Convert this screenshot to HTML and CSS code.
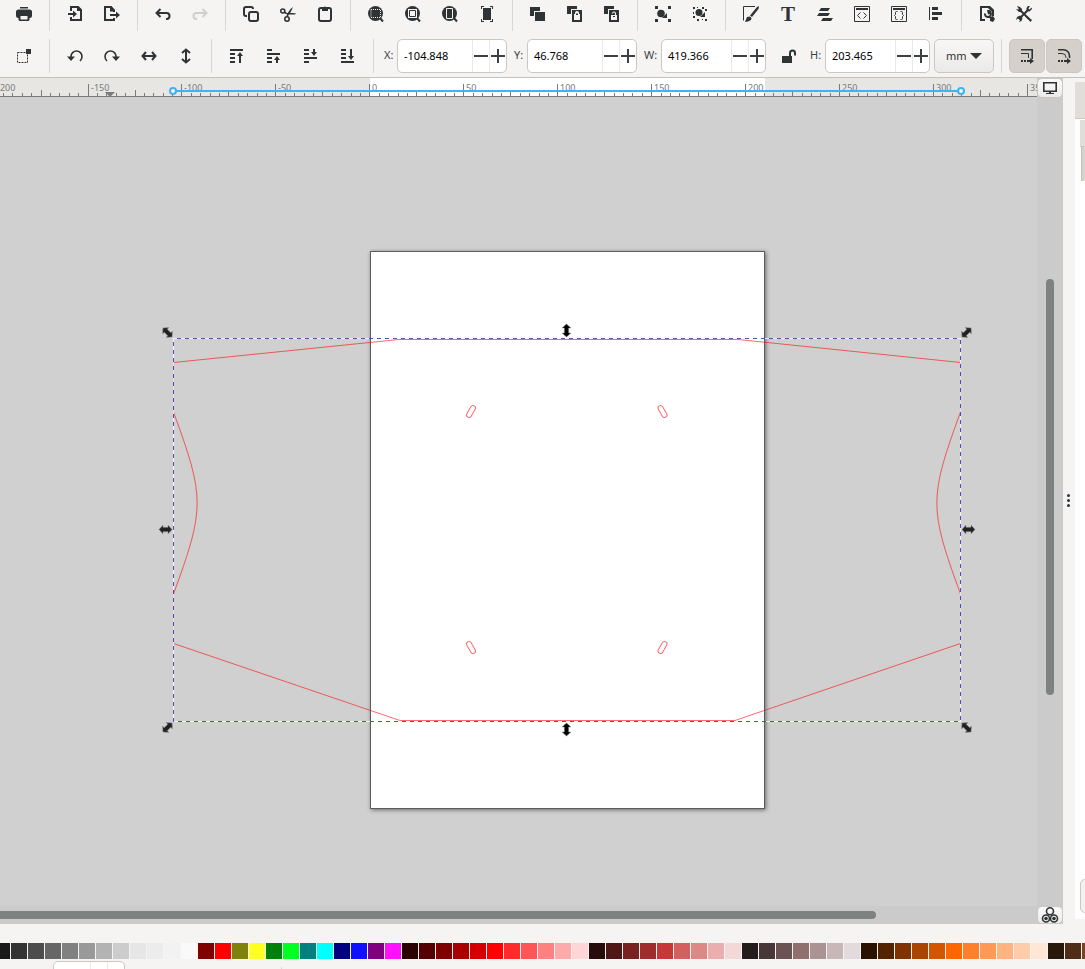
FILE: index.html
```html
<!DOCTYPE html>
<html lang="en">
<head>
<meta charset="utf-8">
<title>Vector editor</title>
<link rel="stylesheet" href="styles.css">
</head>
<body>
<header class="toolbars">
  <div class="bar commands" role="toolbar" aria-label="Commands">
    <button class="tool" aria-label="Print"><svg viewBox="0 0 16 16"><path d="M4 1h8v1.500H4z"/><rect y="3.500" width="16" height="8.500" rx="2.500"/><path d="M2.500 8h11v5.500a1.500 1.500 0 0 1-1.500 1.500H4a1.500 1.500 0 0 1-1.500-1.500z"/><path class="light" d="M4.500 10h7v3.500h-7z"/></svg></button>
    <span class="sep"></span>
    <button class="tool" aria-label="Import"><svg viewBox="0 0 16 16"><path class="line" d="M4 5V1h7l3 3v10H4v-3"/><path d="M10 0h1l4 4v1h-5zM1 7h5V4.500L10 8l-4 3.500V9H1z"/></svg></button>
    <button class="tool" aria-label="Export"><svg viewBox="0 0 16 16"><path class="line" d="M10 6V4.500L7 1H1v13h9v-2"/><path d="M6 0h1l4 4v1.500H6zM6 8h6V5.500L16 9l-4 3.500V10H6z"/></svg></button>
    <span class="sep"></span>
    <button class="tool" aria-label="Undo"><svg viewBox="0 0 16 16"><path class="line" d="M5.500 3 1.500 7l4 4M2 7h9.500a3 3 0 0 1 3 3v0a3 3 0 0 1-3 3H11"/></svg></button>
    <button class="tool" aria-label="Redo" disabled><svg viewBox="0 0 16 16"><path class="line" d="m10.500 3 4 4-4 4M14 7H4.500a3 3 0 0 0-3 3v0a3 3 0 0 0 3 3H5"/></svg></button>
    <span class="sep"></span>
    <button class="tool" aria-label="Copy"><svg viewBox="0 0 16 16"><path class="line" d="M4 10H3a2 2 0 0 1-2-2V3a2 2 0 0 1 2-2h5a2 2 0 0 1 2 2"/><rect class="line" x="6" y="6" width="9" height="9" rx="2"/></svg></button>
    <button class="tool" aria-label="Cut"><svg viewBox="0 0 16 16"><circle class="mid" cx="2.800" cy="5" r="2"/><circle class="mid" cx="7" cy="13" r="2.200"/><path class="mid" d="M4.500 6.300 6.500 7.500M7 11l1-3"/><path d="M6 7h7l3 .500L15 8.500H7zM7 8l3.500-5L13 1l-1.500 3.500L9 9z"/></svg></button>
    <button class="tool" aria-label="Paste"><svg viewBox="0 0 16 16"><rect class="line" x="2" y="2" width="12" height="13" rx="2"/><path d="M5 2h1.500a1.500 1.500 0 0 1 3 0H11v3H5z"/></svg></button>
    <span class="sep"></span>
    <button class="tool" aria-label="Zoom selection"><svg viewBox="0 0 16 16"><circle cx="7.500" cy="7.500" r="7.500"/><path class="line" d="m11 11 4 4.500"/><path class="dots" d="M3 3.500h9.500v8H3z"/></svg></button>
    <button class="tool" aria-label="Zoom drawing"><svg viewBox="0 0 16 16"><circle cx="7.500" cy="7.500" r="7.500"/><path class="line" d="m11 11 4 4.500"/><path class="light" d="M3 3h9v9H3z"/><path class="thin" d="M4.500 4.500h6v6h-6z"/></svg></button>
    <button class="tool" aria-label="Zoom page"><svg viewBox="0 0 16 16"><circle cx="7.500" cy="7.500" r="7.500"/><path class="line" d="m11 11 4 4.500"/><path class="lightline" d="M4.500 2.500h6v10h-6z"/></svg></button>
    <button class="tool" aria-label="Zoom page width"><svg viewBox="0 0 16 16"><path d="M4 2h8v12H4zM2 0h3v1H3v2H2zM14 0h-3v1h2v2h1zM2 16h3v-1H3v-2H2zM14 16h-3v-1h2v-2h1z"/></svg></button>
    <span class="sep"></span>
    <button class="tool" aria-label="Duplicate"><svg viewBox="0 0 16 16"><path d="M0 1h10v4H4v5H0zM5 6h10v9H5z"/></svg></button>
    <button class="tool" aria-label="Clone"><svg viewBox="0 0 16 16"><path d="M0 0h10v3H4v5H0zM5 4h10v12H5z"/><path class="light" d="M7 8h1V7a2 2 0 0 1 4 0v1h1v6H7z"/><path d="M9 7.500h2V9H9z"/></svg></button>
    <button class="tool" aria-label="Unlink clone"><svg viewBox="0 0 16 16"><path d="M0 0h10v3H4v5H0zM5 4h10v12H5z"/><path class="light" d="M7 9h4V7.500a1 1 0 0 0-2 0H8a2 2 0 0 1 4 0V9h1v5H7z"/><path d="M9 10h2v1H9z"/></svg></button>
    <span class="sep"></span>
    <button class="tool" aria-label="Group"><svg viewBox="0 0 16 16"><circle cx="6" cy="7.500" r="3.800"/><path d="M12 7v5H7zM0 0h3v3H0zM13 0h3v3h-3zM0 13h3v3H0zM13 13h3v3h-3z"/></svg></button>
    <button class="tool" aria-label="Ungroup"><svg viewBox="0 0 16 16"><circle cx="7" cy="6.500" r="3.500"/><path d="M13 6v5H8zM1 1h2v2H1zM5 1h1v1H5zM10 1h2v2h-2zM13 3h2v2h-2zM1 6h1v2H1zM1 10h2v2H1zM5 13h2v2H5zM10 13h1v1h-1zM13 13h2v2h-2z"/></svg></button>
    <span class="sep"></span>
    <button class="tool" aria-label="Fill and stroke"><svg viewBox="0 0 16 16"><path class="thin" d="M12 .500H.500v14"/><path d="M16 0 15.500 3 9 11l-2-1.500 7-8.500zM7 10.500 8.500 12 8 14l-3 1.500-3 .500 1-2.500L4 11z"/></svg></button>
    <button class="tool" aria-label="Text and font"><svg viewBox="0 0 16 16"><text class="serif" x="8" y="15" text-anchor="middle">T</text></svg></button>
    <button class="tool" aria-label="Layers"><svg viewBox="0 0 16 16"><path d="M4 2h9l-2 3H2zM2 7h11l-2 3H0zM6 12h10l-2 3H4z" /></svg></button>
    <button class="tool" aria-label="XML editor"><svg viewBox="0 0 16 16"><path class="thin" d="M.500.500h15v15H.500zM6.500 6.500 3.500 9.500l3 3M9.500 6.500l3 3-3 3"/><path d="M2 2h12v2H2z"/></svg></button>
    <button class="tool" aria-label="Selectors and CSS"><svg viewBox="0 0 16 16"><path class="thin" d="M.500.500h15v15H.500zM6.500 5.500h-1a1 1 0 0 0-1 1v2l-1 1 1 1v2a1 1 0 0 0 1 1h1M9.500 5.500h1a1 1 0 0 1 1 1v2l1 1-1 1v2a1 1 0 0 1-1 1h-1"/><path d="M2 2h12v2H2z"/></svg></button>
    <button class="tool" aria-label="Align and distribute"><svg viewBox="0 0 16 16"><path d="M1 1h1v13H1zM4 1h6v3H4zM4 6h10v3H4zM4 11h6v3H4z"/></svg></button>
    <span class="sep"></span>
    <button class="tool" aria-label="Document properties"><svg viewBox="0 0 16 16"><path class="line" d="M6 14H2V1h8l4 3.500V10"/><path d="M9 0h2l4 4v2h-2L9 2z"/><path class="line" d="M6 7.500a3 3 0 1 0 3-2.500M10.500 10.500l3.500 4"/><path d="M8 4h3l1 4-3 .500zM11 11l3-1 2 3-2 3-3-1z"/></svg></button>
    <button class="tool" aria-label="Preferences"><svg viewBox="0 0 16 16"><path class="line" d="m4 4 9 9M13 3 3 13"/><path d="m1 0 3 1 2 2v3L3 6 0 3l3 .500zM12 0l-1.500 2v3l3 .500L16 3l-.500-1.500L13 4l-1-1 2-3zM1 11l3-1.500L6.500 12l-1 3-2.500 1 1-2-2-1.500L0 14zM11 10l5 4-1.500 2-4.500-5z"/></svg></button>
  </div>

  <div class="bar controls" role="toolbar" aria-label="Selector controls">
    <button class="tool" aria-label="Scale stroke"><svg viewBox="0 0 16 16"><path class="dash" d="M1.500 4.500h10v10h-10z"/><path d="M10 1h5v5h-5z"/></svg></button>
    <span class="sep"></span>
    <button class="tool" aria-label="Rotate 90 left"><svg viewBox="0 0 16 16"><path class="mid" d="M4 10V8.500a5.500 5.500 0 0 1 11 0c0 2-1 3.500-2 4.500"/><path d="M0 8.500h8L4 13z"/></svg></button>
    <button class="tool" aria-label="Rotate 90 right"><svg viewBox="0 0 16 16"><path class="mid" d="M12 10V8.500a5.500 5.500 0 0 0-11 0c0 2 1 3.500 2 4.500"/><path d="M16 8.500H8l4 4.500z"/></svg></button>
    <button class="tool" aria-label="Flip horizontal"><svg viewBox="0 0 16 16"><path class="line" d="M2 8h12M5 4 1.500 8 5 12M11 4l3.500 4L11 12"/></svg></button>
    <button class="tool" aria-label="Flip vertical"><svg viewBox="0 0 16 16"><path class="line" d="M8 2v12M4 5l4-3.500L12 5M4 11l4 3.500L12 11"/></svg></button>
    <span class="sep"></span>
    <button class="tool" aria-label="Raise to top"><svg viewBox="0 0 16 16"><path d="M1 1h13v2H1zM1 5h5v2H1zM1 9h5v2H1zM1 13h5v2H1zM11 4l3 4h-2v7h-2V8H8z"/></svg></button>
    <button class="tool" aria-label="Raise"><svg viewBox="0 0 16 16"><path d="M1 1h5v2H1zM1 5h13v2H1zM1 9h5v2H1zM1 13h5v2H1zM11 8l3 4h-2v3h-2v-3H8z"/></svg></button>
    <button class="tool" aria-label="Lower"><svg viewBox="0 0 16 16"><path d="M1 1h5v2H1zM1 5h5v2H1zM1 9h13v2H1zM1 13h5v2H1zM11 8l3-4h-2V1h-2v3H8z"/></svg></button>
    <button class="tool" aria-label="Lower to bottom"><svg viewBox="0 0 16 16"><path d="M1 1h5v2H1zM1 5h5v2H1zM1 9h5v2H1zM1 13h13v2H1zM11 12l3-4h-2V1h-2v7H8z"/></svg></button>
    <span class="sep"></span>
    <label class="label first" for="x">X:</label>
    <div class="spin"><input id="x" value="-104.848"><button aria-label="Decrease X" class="minus"></button><button aria-label="Increase X" class="plus"></button></div>
    <label class="label" for="y">Y:</label>
    <div class="spin"><input id="y" value="46.768"><button aria-label="Decrease Y" class="minus"></button><button aria-label="Increase Y" class="plus"></button></div>
    <label class="label wide" for="w">W:</label>
    <div class="spin short"><input id="w" value="419.366"><button aria-label="Decrease width" class="minus"></button><button aria-label="Increase width" class="plus"></button></div>
    <button class="tool lock" aria-label="Lock ratio"><svg viewBox="0 0 16 16"><path d="M1 8h10v7H1z"/><path class="line" d="M9 8V5a2.500 2.500 0 0 1 5 0v2.500"/></svg></button>
    <label class="label height" for="h">H:</label>
    <div class="spin short"><input id="h" value="203.465"><button aria-label="Decrease height" class="minus"></button><button aria-label="Increase height" class="plus"></button></div>
    <div class="unit"><select aria-label="Unit"><option>mm</option><option>px</option></select></div>
    <span class="sep"></span>
    <button class="tool toggle" aria-label="Scale stroke width" aria-pressed="true"><svg viewBox="0 0 16 16"><path class="mid" d="M2 1.800h11.200V11"/><path class="thin" d="M2 5.500h7.500V10"/><path d="M2 12h2v2H2zM5 12h2v2H5zM8 12h3v-2l4 3-4 3v-2H8z"/></svg></button>
    <button class="tool toggle" aria-label="Scale rounded corners" aria-pressed="true"><svg viewBox="0 0 16 16"><path class="mid" d="M2 1.800h5.500a6 6 0 0 1 6 6V10"/><path class="thin" d="M2 5.500h4a4 4 0 0 1 4 4v.500"/><path d="M2 12h2v2H2zM5 12h2v2H5zM8 12h3v-2l4 3-4 3v-2H8z"/></svg></button>
  </div>
</header>

<main class="work">
  <section class="desk">
    <svg class="ruler" id="ruler" aria-label="Horizontal ruler">
      <rect class="ruler-page" x="370" y="0" width="395" height="18"/>
      <g id="ticks"></g>
      <path class="ruler-base" d="M0 18h4000v1H0z"/>
      <path class="ruler-mark" d="M105 14h10l-5 5z"/>
      <path class="ruler-span" d="M173 13h788"/>
      <circle class="ruler-end" cx="173" cy="13" r="3"/>
      <circle class="ruler-end" cx="961" cy="13" r="3"/>
    </svg>
    <svg class="canvas" aria-label="Drawing">
      <defs><path id="arrow" d="M-6.500 0-2.500-4.500V-2.200H2.500V-4.500L6.500 0 2.500 4.500V2.200H-2.500V4.500z"/></defs>
      <g transform="translate(0 -97)">
        <rect class="page" x="370.500" y="251.500" width="394" height="557"/>
        <g class="shape">
          <path d="M173.500 362.500 399 339.500H738L960.500 362.500V412C929 498 929 508 960.500 594V643.500L735 720.500H400L173.500 643.500V594C205 508 205 498 173.500 412z"/>
          <rect x="-2.500" y="-6.500" width="5" height="13" rx="2.500" transform="translate(471 411.500) rotate(30)"/>
          <rect x="-2.500" y="-6.500" width="5" height="13" rx="2.500" transform="translate(662.500 411.500) rotate(-30)"/>
          <rect x="-2.500" y="-6.500" width="5" height="13" rx="2.500" transform="translate(471 647.500) rotate(-30)"/>
          <rect x="-2.500" y="-6.500" width="5" height="13" rx="2.500" transform="translate(662.500 647.500) rotate(30)"/>
        </g>
        <g class="under"><path d="M173 338.500h788M173 721.500h788M173.500 338v384M960.500 338v384"/></g>
        <g class="bounds"><path d="M177 338.500h784M178 721.500h783M173.500 342v380M960.500 340v382"/></g>
        <g class="handles">
          <use href="#arrow" transform="translate(167.500 332.500) rotate(45)"/>
          <use href="#arrow" transform="translate(966.500 332.500) rotate(-45)"/>
          <use href="#arrow" transform="translate(167.500 727.500) rotate(-45)"/>
          <use href="#arrow" transform="translate(966.500 727.500) rotate(45)"/>
          <use href="#arrow" transform="translate(165.500 529.500)"/>
          <use href="#arrow" transform="translate(968.500 529.500)"/>
          <use class="solid" href="#arrow" transform="translate(566.500 330.500) rotate(90)"/>
          <use class="solid" href="#arrow" transform="translate(566.500 729.500) rotate(90)"/>
        </g>
      </g>
    </svg>
    <div class="hscroll"><div class="thumb"></div></div>
  </section>
  <section class="side">
    <button class="corner" aria-label="Display mode"><svg viewBox="0 0 16 16"><path class="mid" d="M1.800 2.800h12.400v8.400H1.800z"/><path d="M7 11h2v2h3v1H4v-1h3z"/></svg></button>
    <div class="vscroll"><div class="thumb"></div></div>
    <button class="corner low" aria-label="Color management"><svg viewBox="0 0 16 16"><circle class="mid" cx="8" cy="4.300" r="3.500"/><circle class="mid" cx="4" cy="11.500" r="3.500"/><circle class="mid" cx="12" cy="11.500" r="3.500"/><circle cx="4" cy="11.500" r="1.800"/><circle cx="12" cy="11.500" r="1.800"/></svg></button>
  </section>
  <div class="splitter"><i></i><i></i><i></i></div>
  <aside class="dock">
    <div class="dock-tab"></div>
    <div class="dock-body">
      <div class="dock-head"></div>
      <div class="dock-item"></div>
      <button class="dock-button" aria-label="Panel action"></button>
    </div>
  </aside>
</main>

<footer class="bottom">
  <div class="palette" id="palette" aria-label="Palette"></div>
  <div class="status"><div class="spin opacity"><input aria-label="Opacity"><button aria-label="Decrease opacity"></button><button aria-label="Increase opacity"></button></div><span class="status-sep"></span></div>
</footer>
<script src="script.js"></script>
</body>
</html>
```
FILE: styles.css
```css
* { box-sizing: border-box; }

body {
  margin: 0;
  height: 100vh;
  display: flex;
  flex-direction: column;
  overflow: hidden;
  background: #f5f4f2;
  color: #2e3436;
  font: 11px "Noto Sans", sans-serif;
}

button, input, select {
  margin: 0;
  padding: 0;
  border: 0;
  background: none;
  color: inherit;
  font: inherit;
}

.toolbars { border-bottom: 1px solid #c3c0bd; flex: none; }
.bar { display: flex; padding-left: 5px; }
.commands { height: 33px; }
.controls { height: 44px; padding-top: 6px; }

.tool {
  flex: none;
  width: 37px;
  height: 28px;
  padding: 0 10px 0 11px;
  display: flex;
  align-items: center;
}
.controls .tool { height: 34px; }
.tool:disabled { color: #d0cfcd; }

.sep { flex: none; width: 1px; height: 31px; margin: 0 6px 0 7px; background: #d9d7d5; }
.controls .sep { height: 34px; }

svg { fill: currentColor; overflow: visible; }
.tool svg, .corner svg { width: 16px; height: 16px; flex: none; display: block; }
.line, .mid, .thin, .dash { fill: none; stroke: currentColor; stroke-width: 2; }
.mid { stroke-width: 1.6; }
.thin, .dash { stroke-width: 1; }
.dash { stroke-dasharray: 2 1; }
.light { fill: #f5f4f2; }
.lightline, .dots { fill: none; stroke: #f5f4f2; stroke-width: 1; }
.dots { stroke-dasharray: 1 1; }
.serif { font: bold 21px "Liberation Serif", serif; }

.label { flex: none; width: 20px; padding-left: 7px; line-height: 32px; color: #36414a; }
.label.first { width: 17px; padding-left: 4px; }
.label.wide { width: 24px; }
.label.height { width: 18px; padding-left: 3px; }

.spin {
  flex: none;
  display: flex;
  width: 110px;
  height: 34px;
  border: 1px solid #cdc7c2;
  border-radius: 5px;
  background: #fff;
  overflow: hidden;
}
.spin.short { width: 105px; }
.spin input { flex: 1; min-width: 0; padding: 0 0 2px 6px; color: #000; outline: 0; }
.spin button { width: 17px; border-left: 1px solid #ebe9e7; }
.minus, .plus {
  background: linear-gradient(#3b4043, #3b4043) center / 14px 2px no-repeat;
}
.plus {
  background: linear-gradient(#3b4043, #3b4043) center / 14px 2px no-repeat,
    linear-gradient(#3b4043, #3b4043) center / 2px 14px no-repeat;
}

.tool.lock { margin-left: 4px; }

.unit { position: relative; flex: none; width: 60px; margin-left: 4px; }
.unit select {
  appearance: none;
  width: 100%;
  height: 34px;
  padding: 0 0 2px 11px;
  border: 1px solid #cdc7c2;
  border-radius: 5px;
  background: linear-gradient(#f8f7f6, #eceae8);
}
.unit::after {
  content: "";
  position: absolute;
  right: 12px;
  top: 14px;
  border: 6px solid transparent;
  border-top-color: #2e3436;
  border-bottom: 0;
  pointer-events: none;
}

.tool.toggle {
  width: 36px;
  margin-left: 1px;
  padding: 0 9px;
  border: 1px solid #cdc6c0;
  border-radius: 5px;
  background: #d6d0cb;
}

.work { flex: 1; min-height: 0; display: flex; }
.desk { flex: 1; min-width: 0; display: flex; flex-direction: column; }
.ruler { flex: none; width: 100%; height: 19px; overflow: hidden; background: #e8e6e3; }
.ruler-page { fill: #fff; }
.ruler-base, .tick { fill: #777b7c; }
.ruler-text { font-size: 9px; fill: #777b7c; }
.ruler-mark { fill: #777b7c; }
.ruler-span { stroke: #43b1ef; stroke-width: 2; }
.ruler-end { fill: #f5f4f2; stroke: #43b1ef; stroke-width: 2; }

.canvas { flex: 1; min-height: 0; width: 100%; overflow: hidden; background: #d0d0d0; }
.page { fill: #fff; stroke: #5c5c5c; filter: drop-shadow(1px 1px 2px rgba(0, 0, 0, .5)); }
.under path { stroke: #fff; stroke-opacity: .75; }
.shape { fill: none; stroke: #f00; stroke-opacity: .58; }
.bounds path { stroke: #2f2fc0; stroke-opacity: .85; stroke-dasharray: 4 4; }
.handles { fill: #222; stroke: #999; stroke-width: .5; }
.solid { fill: #000; }

.hscroll { flex: none; height: 18px; padding-top: 5px; background: #cbcbcb; }
.hscroll .thumb { width: 84.5%; height: 8px; border-radius: 0 4px 4px 0; background: #7d8180; }

.side { flex: none; width: 26px; display: flex; flex-direction: column; background: #cbcbcb; }
.corner {
  flex: none;
  height: 20px;
  padding: 0 4px;
  border: 1px solid #cdc7c2;
  border-radius: 5px;
  background: linear-gradient(#fbfafa, #edebe9);
  display: flex;
  align-items: center;
}
.corner.low { height: 18px; }
.vscroll { flex: 1; display: flex; justify-content: center; padding: 181px 0 211px; }
.vscroll .thumb { width: 8px; border-radius: 4px; background: #7d8180; }

.splitter {
  flex: none;
  width: 12px;
  padding: 0 1px 2px 0;
  display: flex;
  flex-direction: column;
  align-items: center;
  justify-content: center;
  gap: 2px;
}
.splitter i { width: 3px; height: 3px; border-radius: 2px; background: #2e3436; }

.dock { flex: none; width: 10px; display: flex; flex-direction: column; padding: 4px 0 5px; }
.dock-tab { height: 37px; background: #e1deda; border-bottom: 1px solid #cdc7c2; }
.dock-body { flex: 1; display: flex; flex-direction: column; padding: 1px 0 6px; background: #fff; overflow: hidden; }
.dock-head { height: 27px; margin-left: 5px; background: #e1deda; border-bottom: 1px solid #cdc7c2; }
.dock-item { height: 34px; margin-left: 6px; background: #d6d2ce; border-left: 1px solid #c3beba; }
.dock-button {
  width: 30px;
  height: 34px;
  margin: auto 0 0 5px;
  border: 1px solid #cdc7c2;
  border-radius: 5px;
  background: #f3f2f0;
}

.bottom { flex: none; height: 45px; padding-top: 19px; overflow: hidden; }
.palette { display: flex; gap: 1px; margin-left: -6px; }
.swatch { flex: none; width: 16px; height: 16px; }
.status { display: flex; height: 10px; padding: 2px 0 0 53px; }
.spin.opacity { width: 72px; }
.status-sep { width: 1px; height: 20px; margin: 6px 0 0 156px; background: #d9d7d5; }
```
FILE: script.js
```js
const SVG = "http://www.w3.org/2000/svg";
const ticks = document.getElementById("ticks");
const pxPerMm = 1.879;

function add(name, attrs, text) {
  const el = document.createElementNS(SVG, name);
  for (const key in attrs) el.setAttribute(key, attrs[key]);
  if (text !== undefined) el.textContent = text;
  ticks.appendChild(el);
}

for (let mm = -200; mm <= 350; mm += 5) {
  const x = Math.floor(369.9 + mm * pxPerMm);
  const top = mm % 50 === 0 ? 6 : mm % 25 === 0 ? 12 : 15;
  add("rect", { class: "tick", x: x, y: top, width: 1, height: 18 - top });
  if (mm % 50 === 0) add("text", { class: "ruler-text", x: x + 3, y: 13 }, mm);
}

const colors = `1a1a1a 333333 4d4d4d 666666 808080 999999 b3b3b3 cccccc e6e6e6 ececec f2f2f2 f9f9f9
800000 ff0000 80800d ffff20 008009 00ff20 008080 00ffff 000080 1010ff 800080 ff10ff
2b0000 550000 800000 aa0000 d40000 ff0000 ff2a2a ff5555 ff8080 ffaaaa ffd5d5
280b0b 501616 782121 a02c2c c83737 d35f5f de8787 e9afaf f4d7d7
241c1c 483737 6c5353 916f6f ac9393 c8b7b7 e3dbdb
2b1100 552200 803300 aa4400 d45500 ff6600 ff7f2a ff9955 ffb380 ffccaa ffe6d5
28170b 502d16 784421`.split(/\s+/);

const palette = document.getElementById("palette");
for (const color of colors) {
  const swatch = document.createElement("button");
  swatch.className = "swatch";
  swatch.setAttribute("aria-label", "#" + color);
  swatch.style.background = "#" + color;
  palette.appendChild(swatch);
}
```
